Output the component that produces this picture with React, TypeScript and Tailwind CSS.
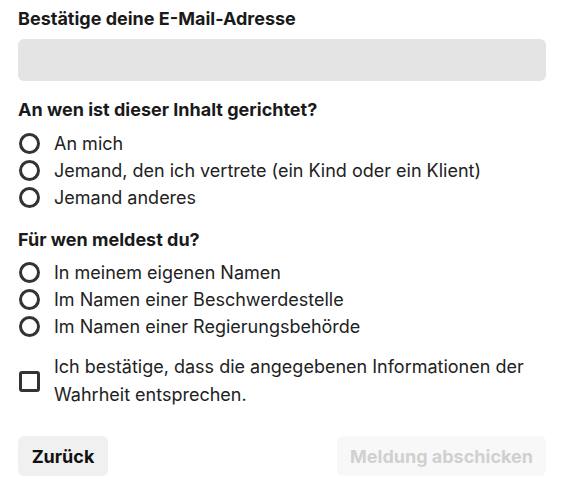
import React, { useState } from 'react';

const audienceOptions = [
  'An mich',
  'Jemand, den ich vertrete (ein Kind oder ein Klient)',
  'Jemand anderes',
];

const reporterOptions = [
  'In meinem eigenen Namen',
  'Im Namen einer Beschwerdestelle',
  'Im Namen einer Regierungsbehörde',
];

function RadioRow({ label, checked, onSelect }: { label: string; checked: boolean; onSelect: () => void }) {
  return (
    <label className="flex items-center h-[27px] cursor-pointer" onClick={onSelect}>
      <span className="w-[21px] h-[21px] ml-[1px] rounded-full border-[3px] border-[#333] flex items-center justify-center">
        {checked && <span className="w-[9px] h-[9px] rounded-full bg-[#333]" />}
      </span>
      <span className="ml-[14px] text-[18px] text-[#222]">{label}</span>
    </label>
  );
}

export default function App() {
  const [audience, setAudience] = useState<string | null>(null);
  const [reporter, setReporter] = useState<string | null>(null);
  const [confirmed, setConfirmed] = useState(false);

  return (
    <div className="w-[562px] h-[499px] bg-white pl-[18px] pr-[16px] pt-[7px] font-['Inter',sans-serif] text-[#1a1a1a]">
      <h2 className="text-[18px] font-bold leading-[24px]">Bestätige deine E-Mail-Adresse</h2>
      <div className="mt-[8px] h-[42px] rounded-[6px] bg-[#e4e4e4]" />

      <h2 className="mt-[17px] text-[18px] font-bold leading-[24px]">An wen ist dieser Inhalt gerichtet?</h2>
      <div className="mt-[8px] flex flex-col">
        {audienceOptions.map((opt) => (
          <RadioRow key={opt} label={opt} checked={audience === opt} onSelect={() => setAudience(opt)} />
        ))}
      </div>

      <h2 className="mt-[17px] text-[18px] font-bold leading-[24px]">Für wen meldest du?</h2>
      <div className="mt-[7px] flex flex-col">
        {reporterOptions.map((opt) => (
          <RadioRow key={opt} label={opt} checked={reporter === opt} onSelect={() => setReporter(opt)} />
        ))}
      </div>

      <label className="mt-[13px] flex items-center cursor-pointer" onClick={() => setConfirmed(!confirmed)}>
        <span className="w-[21px] h-[21px] ml-[1px] shrink-0 rounded-[3px] border-[3px] border-[#333]" />
        <span className="ml-[14px] text-[18px] leading-[28px] text-[#222]">
          Ich bestätige, dass die angegebenen Informationen der Wahrheit entsprechen.
        </span>
      </label>

      <div className="mt-[27px] flex justify-between">
        <button className="h-[40px] w-[90px] rounded-[6px] bg-[#f0f0f0] text-[18px] font-bold text-[#111]">Zurück</button>
        <button disabled className="h-[40px] w-[209px] rounded-[6px] bg-[#f8f8f8] text-[18px] font-bold text-[#d0d0d0]">
          Meldung abschicken
        </button>
      </div>
    </div>
  );
}
